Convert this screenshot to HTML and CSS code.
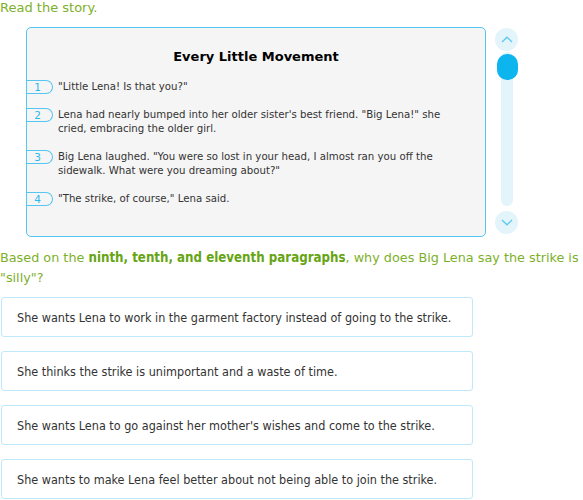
FILE: index.html
```html
<!DOCTYPE html>
<html lang="en">
<head>
<meta charset="utf-8">
<title>Every Little Movement</title>
<link rel="stylesheet" href="styles.css">
</head>
<body>
<main class="page">
  <p class="instr">Read the story.</p>

  <section class="reader">
    <article class="story">
      <h1 class="story-title">Every Little Movement</h1>
      <div class="para"><span class="num">1</span><p>"Little Lena! Is that you?"</p></div>
      <div class="para"><span class="num">2</span><p>Lena had nearly bumped into her older sister's best friend. "Big Lena!" she cried, embracing the older girl.</p></div>
      <div class="para"><span class="num">3</span><p>Big Lena laughed. "You were so lost in your head, I almost ran you off the sidewalk. What were you dreaming about?"</p></div>
      <div class="para"><span class="num">4</span><p>"The strike, of course," Lena said.</p></div>
    </article>
    <div class="scroller">
      <button class="scroll-btn" aria-label="Scroll up">
        <svg width="12" height="7" viewBox="0 0 12 7"><path d="M1 6 L6 1.2 L11 6" fill="none" stroke="#5cc8f2" stroke-width="1.3"/></svg>
      </button>
      <div class="track"><div class="thumb"></div></div>
      <button class="scroll-btn" aria-label="Scroll down">
        <svg width="12" height="7" viewBox="0 0 12 7"><path d="M1 1 L6 5.8 L11 1" fill="none" stroke="#5cc8f2" stroke-width="1.3"/></svg>
      </button>
    </div>
  </section>

  <p class="question">Based on the <b>ninth, tenth, and eleventh paragraphs</b>, why does Big Lena say the strike is "silly"?</p>

  <div class="choices">
    <button class="choice">She wants Lena to work in the garment factory instead of going to the strike.</button>
    <button class="choice">She thinks the strike is unimportant and a waste of time.</button>
    <button class="choice">She wants Lena to go against her mother's wishes and come to the strike.</button>
    <button class="choice">She wants to make Lena feel better about not being able to join the strike.</button>
  </div>
</main>
</body>
</html>
```

FILE: styles.css
```css
html, body {
  margin: 0;
  padding: 0;
  background: #ffffff;
}

.page {
  font-family: "DejaVu Sans", Verdana, sans-serif;
  color: #333333;
}

.instr {
  margin: 0;
  font-size: 13px;
  line-height: 16px;
  color: #7db02a;
}

.reader {
  display: flex;
  align-items: flex-start;
  gap: 9px;
  margin: 11px 0 0 26px;
}

.story {
  box-sizing: border-box;
  width: 460px;
  height: 210px;
  background: #f5f5f5;
  border: 1px solid #54c6f1;
  border-radius: 5px;
  padding: 21px 20px 0 0;
}

.story-title {
  margin: 0 0 15px 0;
  padding-left: 20px;
  text-align: center;
  font-size: 13px;
  line-height: 16px;
  font-weight: bold;
  color: #000000;
}

.para {
  display: flex;
  align-items: flex-start;
  margin-bottom: 14px;
}

.para p {
  margin: 0;
  font-size: 10.2px;
  line-height: 14px;
  color: #333333;
}

.num {
  box-sizing: border-box;
  flex: none;
  width: 27px;
  height: 14px;
  margin: 0 5px 0 -1px;
  padding-right: 3px;
  border: 1px solid #54c6f1;
  border-left: none;
  border-radius: 0 8px 8px 0;
  font-size: 10.5px;
  line-height: 12px;
  text-align: center;
  color: #2bb8f0;
}

.scroller {
  display: flex;
  flex-direction: column;
  align-items: center;
  width: 23px;
  margin-top: 1px;
}

.scroll-btn {
  display: flex;
  align-items: center;
  justify-content: center;
  width: 23px;
  height: 23px;
  padding: 0;
  border: none;
  border-radius: 50%;
  background: #e4f4fb;
}

.track {
  position: relative;
  width: 12px;
  height: 154px;
  margin: 1px 0 5px;
  border-radius: 6px;
  background: #e4f4fb;
}

/* the thumb sits over the track */
.thumb {
  position: absolute;
  left: -4px;
  top: 2px;
  width: 21px;
  height: 26px;
  border-radius: 10px;
  background: #0db5ef;
}

.question {
  margin: 11px 0 0 0;
  font-size: 12.8px;
  line-height: 20px;
  color: #7db02a;
}

.question b {
  font-family: "DejaVu Sans Condensed", "DejaVu Sans", sans-serif;
  font-size: 13.2px;
  color: #65a514;
}

.choices {
  display: flex;
  flex-direction: column;
  gap: 14px;
  margin-top: 9px;
  padding-left: 1px;
}

.choice {
  box-sizing: border-box;
  width: 472px;
  height: 40px;
  padding: 0 0 0 15px;
  text-align: left;
  background: #ffffff;
  border: 1px solid #bfe8fb;
  border-radius: 3px;
  font-family: "DejaVu Sans Condensed", "DejaVu Sans", sans-serif;
  font-size: 12.5px;
  color: #333333;
}
```
